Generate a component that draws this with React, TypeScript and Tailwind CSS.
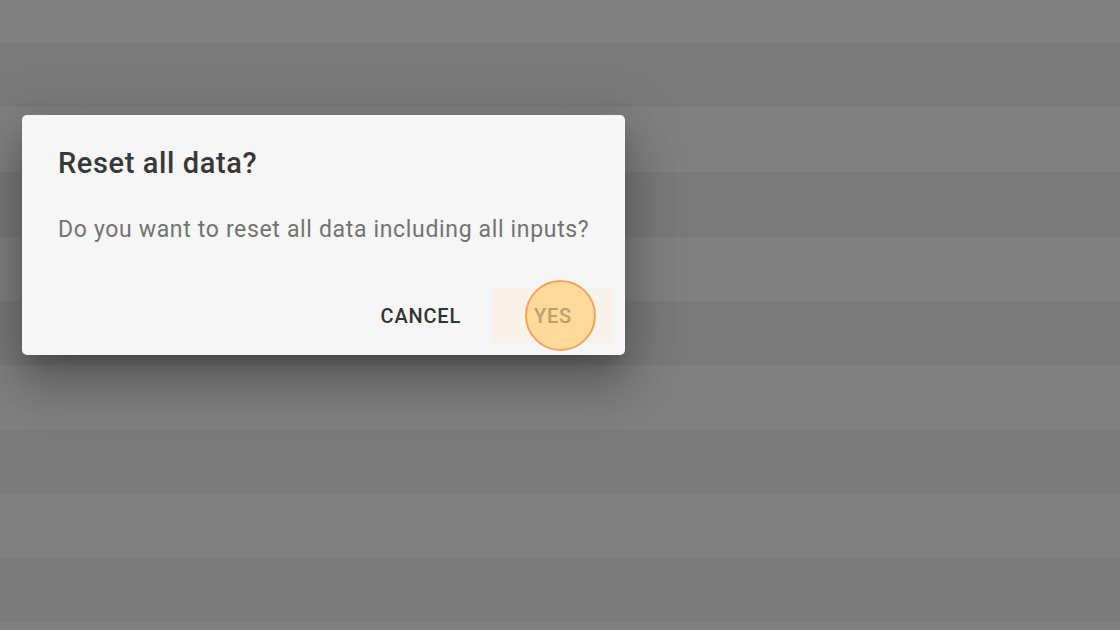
import React from 'react';

const bands = [
  { h: 'h-[43px]', c: 'bg-[#808080]' },
  { h: 'h-[64px]', c: 'bg-[#7a7a7a]' },
  { h: 'h-[65px]', c: 'bg-[#808080]' },
  { h: 'h-[65px]', c: 'bg-[#7a7a7a]' },
  { h: 'h-[64px]', c: 'bg-[#808080]' },
  { h: 'h-[64px]', c: 'bg-[#7a7a7a]' },
  { h: 'h-[65px]', c: 'bg-[#808080]' },
  { h: 'h-[64px]', c: 'bg-[#7a7a7a]' },
  { h: 'h-[64px]', c: 'bg-[#808080]' },
  { h: 'h-[64px]', c: 'bg-[#7a7a7a]' },
  { h: 'h-[8px]', c: 'bg-[#808080]' },
];

export default function App() {
  return (
    <div className="relative w-[1120px] h-[630px] overflow-hidden font-['Roboto',sans-serif]">
      {/* striped backdrop */}
      <div className="flex flex-col">
        {bands.map((b, i) => (
          <div key={i} className={`${b.h} ${b.c}`} />
        ))}
      </div>

      {/* dialog */}
      <div className="absolute left-[22px] top-[115px] w-[603px] h-[240px] rounded-[5px] bg-[#f6f6f6] shadow-[0_15px_20px_-9px_rgba(0,0,0,0.25),0_32px_50px_4px_rgba(0,0,0,0.16),0_12px_60px_10px_rgba(0,0,0,0.14)] flex flex-col">
        <div className="px-[36px] pt-[30px]">
          <h2 className="text-[29px] leading-[36px] font-medium tracking-[0.6px] text-[#383838]">Reset all data?</h2>
          <p className="mt-[33px] text-[23px] leading-[32px] tracking-[0.66px] text-[#737373] whitespace-nowrap">
            Do you want to reset all data including all inputs?
          </p>
        </div>
        <div className="mt-auto flex justify-end items-center gap-[32px] pr-[12px] pb-[12px]">
          <button className="text-[20px] font-medium tracking-[0.04em] text-[#333333]">CANCEL</button>
          <button className="relative w-[120px] h-[55px] rounded-[4px] bg-[#f7f3ea] flex items-center justify-center">
            <span className="absolute left-[32px] top-[-8px] w-[71px] h-[71px] rounded-full bg-[#ffd89c] border-2 border-[#f2a55e]" />
            <span className="relative text-[20px] font-medium tracking-[0.04em] text-[#bba16c]">YES</span>
          </button>
        </div>
      </div>
    </div>
  );
}
